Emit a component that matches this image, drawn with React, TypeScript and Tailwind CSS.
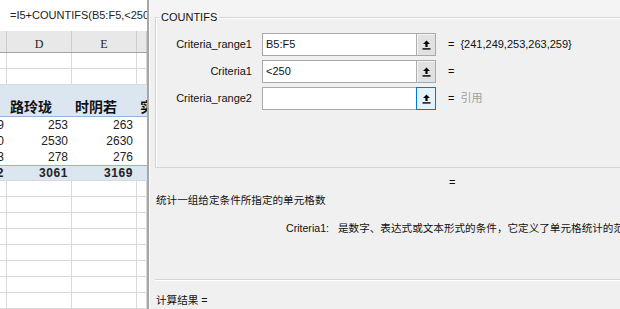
import React from 'react'

const font = { fontFamily: '"Liberation Sans", "Noto Sans CJK SC", sans-serif' }
const cjk = { fontFamily: '"Noto Sans CJK SC", "Liberation Sans", sans-serif' }

type Row = { kind: 'empty' | 'head' | 'data' | 'total'; cells: string[] }

const rows: Row[] = [
  { kind: 'empty', cells: ['', '', '', ''] },
  { kind: 'empty', cells: ['', '', '', ''] },
  { kind: 'head', cells: ['', '路玲珑', '时阴若', '实'] },
  { kind: 'data', cells: ['9', '253', '263', ''] },
  { kind: 'data', cells: ['0', '2530', '2630', ''] },
  { kind: 'data', cells: ['3', '278', '276', ''] },
  { kind: 'total', cells: ['2', '3061', '3169', ''] },
  ...Array.from({ length: 8 }, () => ({ kind: 'empty' as const, cells: ['', '', '', ''] })),
]

const widths = ['w-[7px]', 'w-[65px]', 'w-[65px]', 'w-[10px]']

function UpArrow() {
  return (
    <svg width="9" height="10" viewBox="0 0 9 10" className="block">
      <path d="M4.5 0.5 L8 4 H5.6 V7 H3.4 V4 H1 Z" fill="#000" />
      <rect x="0.5" y="8.2" width="8" height="1.4" fill="#000" />
    </svg>
  )
}

function Sheet() {
  return (
    <div className="w-[147px] shrink-0 h-full bg-white overflow-hidden">
      {/* Formula bar */}
      <div className="h-[31px] flex items-center pl-[10px] whitespace-nowrap text-[11px] text-[#222]" style={font}>
        =I5+COUNTIFS(B5:F5,&lt;250
      </div>

      {/* Column headers */}
      <div className="h-[22px] flex bg-[#e8e8e8] border-b border-[#a3a3a3]">
        {['', 'D', 'E', ''].map((c, i) => (
          <div
            key={i}
            className={`${widths[i]} shrink-0 flex items-end justify-center pb-[1px] border-r border-[#cdcdcd] text-[12px] leading-[14px] text-[#222]`}
            style={{ fontFamily: '"Liberation Serif", serif' }}
          >
            {c}
          </div>
        ))}
      </div>

      {rows.map((r, ri) => {
        if (r.kind === 'empty') {
          return (
            <div key={ri} className="h-[16px] flex border-b border-[#d9d9d9]">
              {r.cells.map((_, i) => (
                <div key={i} className={`${widths[i]} shrink-0 border-r border-[#d9d9d9]`} />
              ))}
            </div>
          )
        }
        if (r.kind === 'head') {
          return (
            <div key={ri} className="h-[32px] flex bg-[#dce6f1] border-b border-[#95b3d7]">
              {r.cells.map((c, i) => (
                <div
                  key={i}
                  className={`${widths[i]} shrink-0 flex items-end pl-[3px] pb-[2px] overflow-hidden whitespace-nowrap text-[14px] leading-[16px] font-bold text-[#111]`}
                  style={cjk}
                >
                  {c}
                </div>
              ))}
            </div>
          )
        }
        const total = r.kind === 'total'
        return (
          <div
            key={ri}
            className={`h-[16px] flex ${total ? 'bg-[#dce6f1] border-t border-[#95b3d7] border-b border-b-[#d9d9d9]' : ''}`}
          >
            {r.cells.map((c, i) => (
              <div
                key={i}
                className={`${widths[i]} shrink-0 flex items-center justify-end ${i === 0 ? 'pr-[3px]' : 'pr-[4px]'} overflow-hidden text-[12px] leading-[14px] text-[#222] ${total ? 'font-bold tracking-[0.6px]' : ''}`}
                style={font}
              >
                {c}
              </div>
            ))}
          </div>
        )
      })}
    </div>
  )
}

function ArgRow({ label, value, result, focused, hint }: { label: string; value: string; result: string; focused?: boolean; hint?: boolean }) {
  return (
    <div className="h-[23px] flex items-center">
      <div className="w-[96px] shrink-0 text-right text-[11px] text-[#111]">{label}</div>
      <div className="ml-[10px] w-[174px] h-[23px] shrink-0 flex bg-white border border-[#a9a9a9]">
        <div className="flex-1 flex items-center pl-[3px] text-[11px] text-[#111]">{value}</div>
        {focused ? (
          <div className="w-[20px] h-[23px] -my-px -mr-px flex items-center justify-center bg-[#e5f1fb] border border-[#0078d7]">
            <UpArrow />
          </div>
        ) : (
          <div className="w-[19px] h-full flex items-center justify-center bg-[#e1e1e1] border-l border-[#adadad] shadow-[inset_1px_1px_0_#f5f5f5]">
            <UpArrow />
          </div>
        )}
      </div>
      <div className="ml-[12px] text-[11px] text-[#111]">=</div>
      <div className={`ml-[6px] text-[11px] whitespace-nowrap ${hint ? 'text-[#a0a0a0]' : 'text-[#111]'}`}>{result}</div>
    </div>
  )
}

function Dialog() {
  return (
    <div
      className="flex-1 h-full overflow-hidden bg-[linear-gradient(#f4f4f4_0,#f4f4f4_17px,#f0f0f0_17px)] border-l border-[#fafafa]"
      style={font}
    >
      <div className="pt-[11px] pl-[5px] -mr-[12px]">
        <fieldset className="border border-[#d5d5d5] pt-[10px] pb-[57px] shadow-[inset_1px_1px_0_#ffffff]">
          <legend className="ml-[3px] px-[2px] text-[11px] leading-[12px] text-[#111]">COUNTIFS</legend>
          <div className="flex flex-col gap-[4px]">
            <ArgRow label="Criteria_range1" value="B5:F5" result="{241,249,253,263,259}" />
            <ArgRow label="Criteria1" value="<250" result="" />
            <ArgRow label="Criteria_range2" value="" result="引用" focused hint />
          </div>
        </fieldset>
      </div>

      <div className="pl-[299px] mt-[7px] h-[14px] leading-[14px] text-[11px] text-[#111]">=</div>
      <div className="pl-[6px] mt-[4px] h-[14px] leading-[14px] text-[10.6px] text-[#111] whitespace-nowrap">
        统计一组给定条件所指定的单元格数
      </div>
      <div className="pl-[136px] mt-[14px] h-[14px] leading-[14px] text-[10.6px] text-[#111] whitespace-nowrap flex">
        <span>Criteria1:</span>
        <span className="ml-[9px]">是数字、表达式或文本形式的条件，它定义了单元格统计的范围</span>
      </div>
      <div className="ml-[5px] mt-[44px] border-t border-[#d5d5d5] border-b border-b-[#ffffff]" />
      <div className="pl-[6px] mt-[12px] h-[14px] leading-[14px] text-[10.6px] text-[#111] whitespace-nowrap">计算结果 =</div>
    </div>
  )
}

export default function App() {
  return (
    <div className="w-[620px] h-[309px] flex overflow-hidden bg-white">
      <Sheet />
      <div className="w-[2px] shrink-0 bg-[#a6a6a6]" />
      <Dialog />
    </div>
  )
}
